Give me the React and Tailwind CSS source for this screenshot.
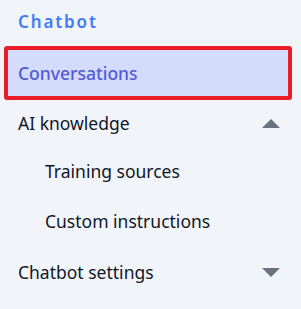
export default function App() {
  const font = { fontFamily: '"Noto Sans", "Open Sans", sans-serif' };
  return (
    <div className="w-[301px] h-[309px] bg-[#f1f4f9] overflow-hidden" style={font}>
      <div className="h-[42px] flex items-center pl-[18px] pt-[1px]">
        <span className="text-[17px] font-semibold tracking-[0.11em] text-[#3f7cf6]">Chatbot</span>
      </div>
      <div className="ml-[4px] mr-[9px] mt-[4px] h-[54px] border-[4px] border-[#ea1c28] rounded-[3px] bg-[#d4dcfc] flex items-center pl-[10px]">
        <span className="text-[17.5px] font-medium text-[#5459d6]">Conversations</span>
      </div>
      <div className="flex flex-col">
        <div className="h-[46px] flex items-center justify-between pl-[18px] pr-[21px]">
          <span className="text-[17.5px] text-[#111827]">AI knowledge</span>
          <svg width="18" height="9" viewBox="0 0 18 9"><polygon points="9,0 18,9 0,9" fill="#6b7280" /></svg>
        </div>
        <div className="h-[50px] flex items-center pl-[45px]">
          <span className="text-[17.5px] text-[#111827]">Training sources</span>
        </div>
        <div className="h-[51px] flex items-center pl-[45px]">
          <span className="text-[17.5px] text-[#111827]">Custom instructions</span>
        </div>
        <div className="h-[50px] flex items-center justify-between pl-[18px] pr-[21px]">
          <span className="text-[17.5px] text-[#111827]">Chatbot settings</span>
          <svg width="18" height="9" viewBox="0 0 18 9"><polygon points="0,0 18,0 9,9" fill="#6b7280" /></svg>
        </div>
      </div>
    </div>
  );
}
